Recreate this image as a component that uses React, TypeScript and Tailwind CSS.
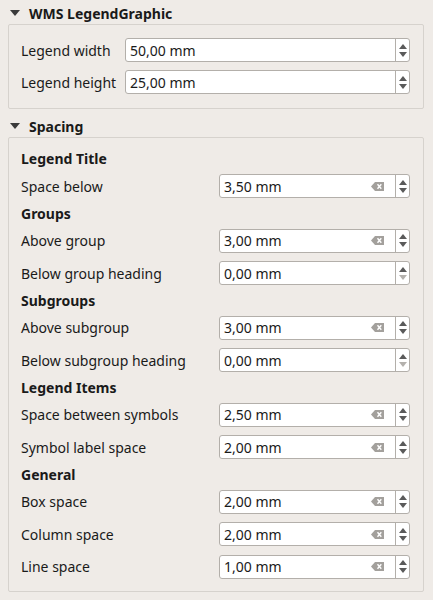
import React from 'react';

type Row =
  | { kind: 'head'; label: string }
  | { kind: 'field'; label: string; value: string; atMin?: boolean };

const spacingRows: Row[] = [
  { kind: 'head', label: 'Legend Title' },
  { kind: 'field', label: 'Space below', value: '3,50 mm' },
  { kind: 'head', label: 'Groups' },
  { kind: 'field', label: 'Above group', value: '3,00 mm' },
  { kind: 'field', label: 'Below group heading', value: '0,00 mm', atMin: true },
  { kind: 'head', label: 'Subgroups' },
  { kind: 'field', label: 'Above subgroup', value: '3,00 mm' },
  { kind: 'field', label: 'Below subgroup heading', value: '0,00 mm', atMin: true },
  { kind: 'head', label: 'Legend Items' },
  { kind: 'field', label: 'Space between symbols', value: '2,50 mm' },
  { kind: 'field', label: 'Symbol label space', value: '2,00 mm' },
  { kind: 'head', label: 'General' },
  { kind: 'field', label: 'Box space', value: '2,00 mm' },
  { kind: 'field', label: 'Column space', value: '2,00 mm' },
  { kind: 'field', label: 'Line space', value: '1,00 mm' },
];

const ClearIcon = () => (
  <svg width="13" height="9" viewBox="0 0 13 9" className="shrink-0">
    <path d="M4 0 H13 V9 H4 L0 4.5 Z" fill="#a3a09c" />
    <path d="M6.5 2.2 L10.3 6.8 M10.3 2.2 L6.5 6.8" stroke="#fff" strokeWidth="1.4" />
  </svg>
);

const Spinner = ({ atMin }: { atMin?: boolean }) => (
  <div className="flex h-full w-[14px] flex-col items-center justify-center gap-[3px] border-l border-[#b3afaa]">
    <svg width="8" height="5" viewBox="0 0 8 5">
      <path d="M0 5 L4 0 L8 5 Z" fill="#5a5a5a" />
    </svg>
    <svg width="8" height="5" viewBox="0 0 8 5">
      <path d="M0 0 L8 0 L4 5 Z" fill={atMin ? '#b4b1ad' : '#5a5a5a'} />
    </svg>
  </div>
);

const SpinBox = ({
  value,
  clearable,
  atMin,
  className,
}: {
  value: string;
  clearable?: boolean;
  atMin?: boolean;
  className: string;
}) => (
  <div
    className={`flex h-[24px] items-center rounded-[3px] border border-[#b3afaa] bg-white ${className}`}
  >
    <span className="flex-1 pl-[4px] text-[14px] text-[#1a1a1a]">{value}</span>
    {clearable && (
      <div className="mr-[11px] flex items-center">
        <ClearIcon />
      </div>
    )}
    <Spinner atMin={atMin} />
  </div>
);

const SectionHeader = ({ title }: { title: string }) => (
  <div className="flex h-[22px] items-center gap-[9px] pl-[10px]">
    <svg width="10" height="6" viewBox="0 0 10 6">
      <path d="M0 0 L10 0 L5 6 Z" fill="#3a3a3a" />
    </svg>
    <span className="text-[14px] font-bold text-[#1a1a1a]">{title}</span>
  </div>
);

export default function App() {
  return (
    <div
      className="h-[600px] w-[433px] overflow-hidden bg-[#efebe7] text-[#1a1a1a]"
      style={{ fontFamily: '"Noto Sans", "Open Sans", sans-serif' }}
    >
      <div className="pt-[2px]">
        <SectionHeader title="WMS LegendGraphic" />
      </div>
      <div className="ml-[8px] mr-[9px] flex flex-col gap-[8px] rounded-[2px] border border-[#d6d2cd] pb-[14px] pl-[12px] pr-[13px] pt-[13px]">
        <div className="flex items-center">
          <span className="w-[104px] text-[14px]">Legend width</span>
          <SpinBox value="50,00 mm" className="flex-1" />
        </div>
        <div className="flex items-center">
          <span className="w-[104px] text-[14px]">Legend height</span>
          <SpinBox value="25,00 mm" className="flex-1" />
        </div>
      </div>

      <div className="pt-[6px]">
        <SectionHeader title="Spacing" />
      </div>
      <div className="ml-[8px] mr-[9px] flex flex-col gap-[8.5px] rounded-[2px] border border-[#d6d2cd] pb-[12px] pl-[12px] pr-[13px] pt-[14px]">
        {spacingRows.map((r) =>
          r.kind === 'head' ? (
            <div key={r.label} className="flex h-[13.5px] items-center text-[14px] font-bold">
              {r.label}
            </div>
          ) : (
            <div key={r.label} className="flex items-center">
              <span className="flex-1 text-[14px]">{r.label}</span>
              <SpinBox
                value={r.value}
                clearable={!r.atMin}
                atMin={r.atMin}
                className="w-[191px]"
              />
            </div>
          ),
        )}
      </div>
    </div>
  );
}
